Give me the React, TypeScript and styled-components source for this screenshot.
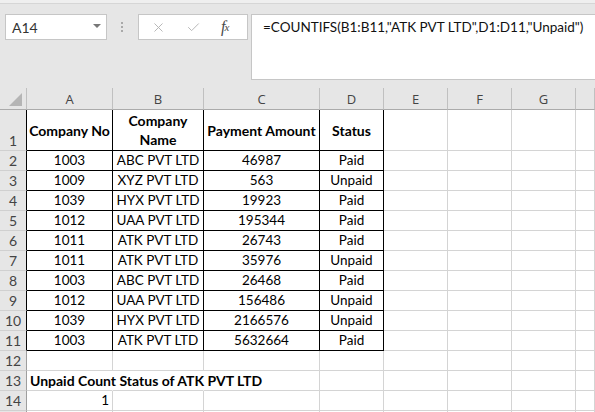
import React from 'react';
import styled, { createGlobalStyle } from 'styled-components';
import { X, Check } from 'lucide-react';

const GlobalStyle = createGlobalStyle`
  html, body {
    margin: 0;
    padding: 0;
    background: #e6e6e6;
  }
  body {
    font-family: Lato, "Open Sans", sans-serif;
  }
`;

const Page = styled.div`
  width: 595px;
  height: 412px;
  overflow: hidden;
  background: #e6e6e6;
`;

const TopStrip = styled.div`
  height: 3px;
  background: #efefef;
  border-bottom: 1px solid #d6d6d6;
`;

const Toolbar = styled.div`
  display: flex;
  align-items: flex-start;
  height: 84px;
  padding-top: 10px;
  box-sizing: border-box;
`;

const NameBox = styled.div`
  display: flex;
  align-items: center;
  justify-content: space-between;
  width: 102px;
  height: 26px;
  margin-left: 5px;
  box-sizing: border-box;
  background: #fff;
  border: 1px solid #c6c6c6;
  padding: 0 5px 0 6px;
  font-family: Lato, sans-serif;
  font-size: 14px;
  color: #333;
`;

const DropArrow = styled.span`
  width: 0;
  height: 0;
  border-left: 4px solid transparent;
  border-right: 4px solid transparent;
  border-top: 4px solid #777;
  margin-bottom: 2px;
`;

const Grip = styled.div`
  display: flex;
  flex-direction: column;
  gap: 2px;
  width: 3px;
  margin: 8px 14px 0 14px;
  span {
    width: 2px;
    height: 2px;
    background: #a9a9a9;
  }
`;

const ButtonBox = styled.div`
  display: flex;
  align-items: center;
  width: 110px;
  height: 26px;
  box-sizing: border-box;
  background: #fff;
  border: 1px solid #c6c6c6;
  padding-left: 12px;
  gap: 20px;
  color: #b3b3b3;
`;

const Fx = styled.span`
  font-family: "Liberation Serif", serif;
  font-style: italic;
  font-size: 16px;
  color: #4a4a4a;
  letter-spacing: -1px;
  sub {
    font-size: 11px;
    vertical-align: 1px;
  }
`;

const FormulaBox = styled.div`
  flex: 1;
  height: 66px;
  margin-left: 3px;
  box-sizing: border-box;
  background: #fff;
  border: 1px solid #c6c6c6;
  border-right: none;
  padding: 4px 0 0 11px;
  font-family: Lato, sans-serif;
  font-size: 13.5px;
  color: #111;
  white-space: nowrap;
`;

const Grid = styled.div`
  display: grid;
  grid-template-columns: 27px 86px 91px 116px 64px 64px 64px 64px 1fr;
  grid-template-rows: 22px 41px repeat(14, 20px);
`;

const Corner = styled.div`
  position: relative;
  background: #e6e6e6;
  border-right: 1px solid #c0c0c0;
  border-bottom: 1px solid #ababab;
  &::after {
    content: '';
    position: absolute;
    right: 4px;
    bottom: 3px;
    width: 0;
    height: 0;
    border-left: 13px solid transparent;
    border-bottom: 13px solid #b5b5b5;
  }
`;

const ColHead = styled.div`
  display: flex;
  align-items: center;
  justify-content: center;
  background: #e6e6e6;
  border-right: 1px solid #c0c0c0;
  border-bottom: 1px solid #ababab;
  font-family: "Open Sans", sans-serif;
  font-size: 13px;
  color: #444;
  padding-top: 1px;
`;

const RowHead = styled.div<{ $dark?: boolean }>`
  display: flex;
  align-items: flex-end;
  justify-content: center;
  background: #e6e6e6;
  border-right: 1px solid ${p => (p.$dark ? '#000' : '#9e9e9e')};
  border-bottom: 1px solid #d0d0d0;
  font-family: Lato, sans-serif;
  font-size: 14px;
  color: #444;
  line-height: 18px;
`;

const Cell = styled.div<{
  $boxed?: boolean;
  $align?: string;
  $bold?: boolean;
  $middle?: boolean;
  $open?: boolean;
  $over?: boolean;
}>`
  display: flex;
  align-items: ${p => (p.$middle ? 'center' : 'flex-end')};
  justify-content: ${p => p.$align ?? 'flex-start'};
  text-align: center;
  background: #fff;
  border-right: 1px solid ${p => (p.$boxed ? '#000' : p.$open ? '#fff' : '#d4d4d4')};
  border-bottom: 1px solid ${p => (p.$boxed ? '#000' : '#d4d4d4')};
  padding: 0 3px;
  font-family: Lato, sans-serif;
  font-size: ${p => (p.$bold ? '14px' : '13.5px')};
  font-weight: ${p => (p.$bold ? 700 : 400)};
  line-height: 19px;
  color: #000;
  white-space: nowrap;
  min-width: 0;
  z-index: ${p => (p.$over ? 1 : 'auto')};
  span.wrap {
    white-space: normal;
  }
`;

type Row = [string, string, string, string];

const data: Row[] = [
  ['1003', 'ABC PVT LTD', '46987', 'Paid'],
  ['1009', 'XYZ PVT LTD', '563', 'Unpaid'],
  ['1039', 'HYX PVT LTD', '19923', 'Paid'],
  ['1012', 'UAA PVT LTD', '195344', 'Paid'],
  ['1011', 'ATK PVT LTD', '26743', 'Paid'],
  ['1011', 'ATK PVT LTD', '35976', 'Unpaid'],
  ['1003', 'ABC PVT LTD', '26468', 'Paid'],
  ['1012', 'UAA PVT LTD', '156486', 'Unpaid'],
  ['1039', 'HYX PVT LTD', '2166576', 'Unpaid'],
  ['1003', 'ATK PVT LTD', '5632664', 'Paid'],
];

const letters = ['A', 'B', 'C', 'D', 'E', 'F', 'G', ''];

const Blanks: React.FC<{ n: number }> = ({ n }) => (
  <>
    {Array.from({ length: n }).map((_, i) => (
      <Cell key={i} />
    ))}
  </>
);

const App: React.FC = () => {
  return (
    <Page>
      <GlobalStyle />
      <TopStrip />
      <Toolbar>
        <NameBox>
          A14
          <DropArrow />
        </NameBox>
        <Grip>
          <span />
          <span />
          <span />
        </Grip>
        <ButtonBox>
          <X size={15} strokeWidth={1.5} />
          <Check size={15} strokeWidth={1.5} />
          <Fx>
            f<sub>x</sub>
          </Fx>
        </ButtonBox>
        <FormulaBox>=COUNTIFS(B1:B11,"ATK PVT LTD",D1:D11,"Unpaid")</FormulaBox>
      </Toolbar>

      <Grid>
        <Corner />
        {letters.map((l, i) => (
          <ColHead key={i}>{l}</ColHead>
        ))}

        <RowHead $dark>1</RowHead>
        <Cell $boxed $bold $middle $align="center">Company No</Cell>
        <Cell $boxed $bold $middle $align="center">
          <span className="wrap">
            Company
            <br />
            Name
          </span>
        </Cell>
        <Cell $boxed $bold $middle $align="center">Payment Amount</Cell>
        <Cell $boxed $bold $middle $align="center">Status</Cell>
        <Blanks n={4} />

        {data.map((r, i) => (
          <React.Fragment key={i}>
            <RowHead $dark>{i + 2}</RowHead>
            {r.map((v, j) => (
              <Cell key={j} $boxed $align="center">
                {v}
              </Cell>
            ))}
            <Blanks n={4} />
          </React.Fragment>
        ))}

        <RowHead>12</RowHead>
        <Blanks n={8} />

        <RowHead>13</RowHead>
        <Cell $bold $open $over>Unpaid Count Status of ATK PVT LTD</Cell>
        <Cell $open />
        <Blanks n={6} />

        <RowHead>14</RowHead>
        <Cell $align="flex-end">1</Cell>
        <Blanks n={7} />

        <RowHead />
        <Blanks n={8} />
      </Grid>
    </Page>
  );
};

export default App;
